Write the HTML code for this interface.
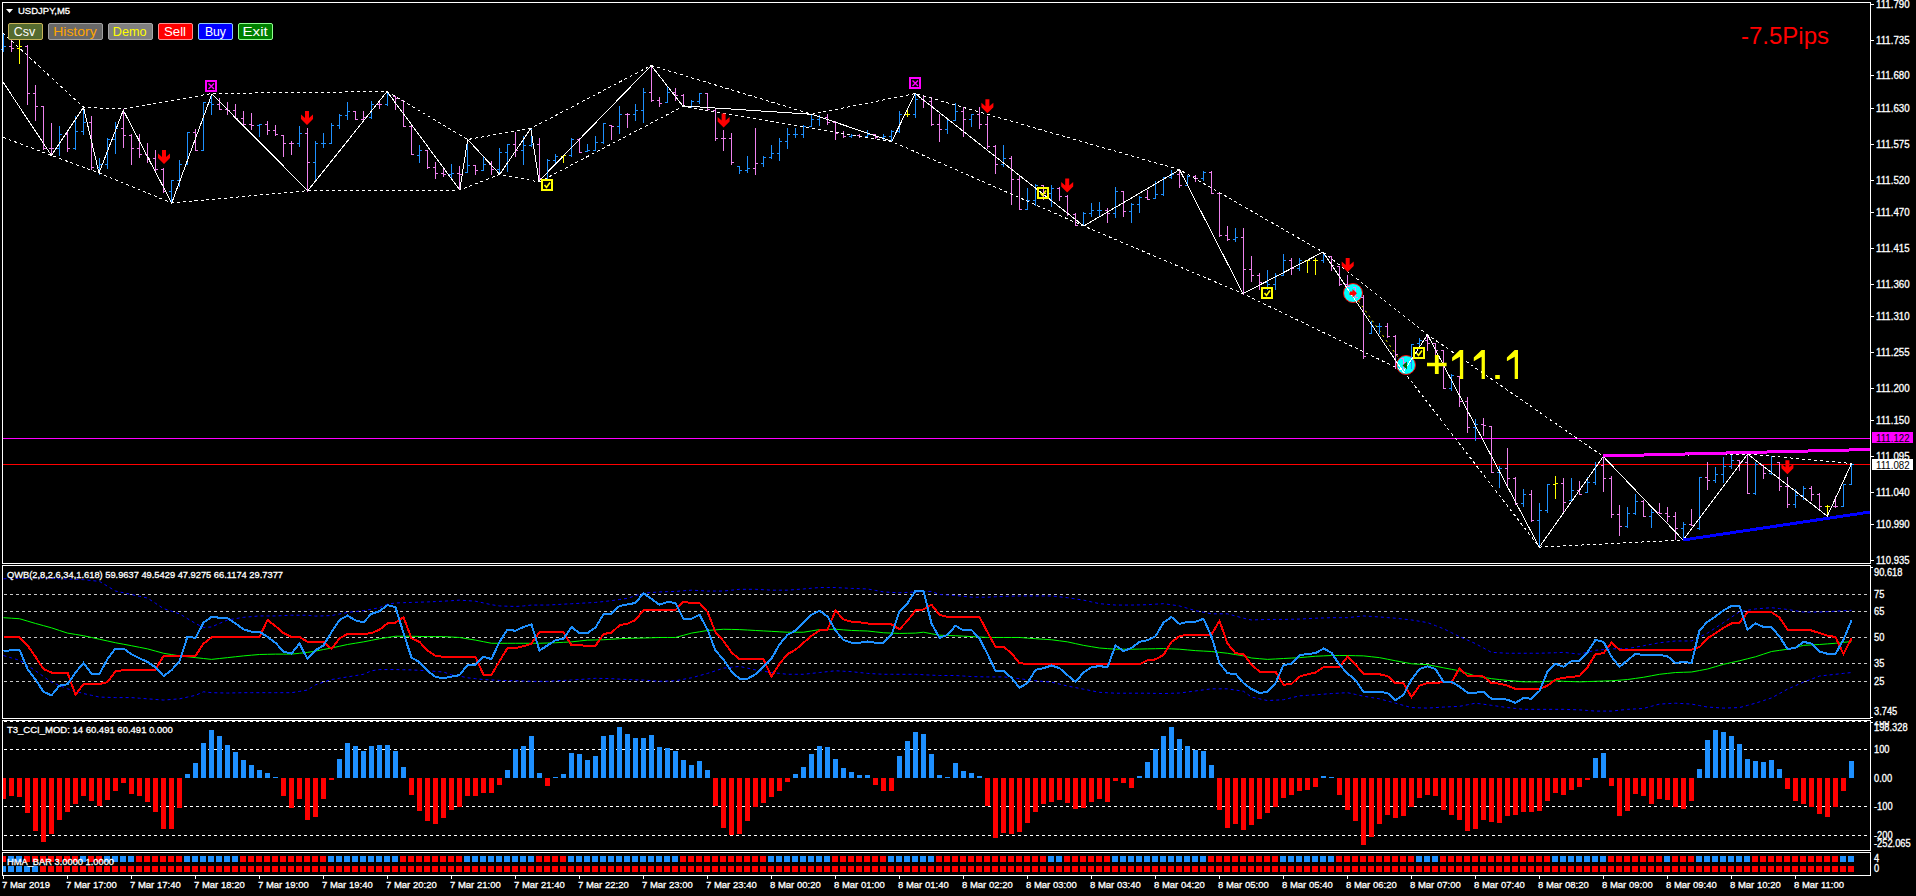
<!DOCTYPE html>
<html><head><meta charset="utf-8"><title>USDJPY,M5</title>
<style>
html,body{margin:0;padding:0;background:#000;width:1916px;height:896px;overflow:hidden}
svg{display:block}
text{font-family:"Liberation Sans",sans-serif}
.bt text{stroke:#FFFFFF;stroke-width:0.3px}
</style></head><body>
<svg width="1916" height="896" viewBox="0 0 1916 896">
<defs><clipPath id="mainclip"><rect x="3" y="3" width="1867" height="560"/></clipPath><clipPath id="cciax"><rect x="1872" y="721" width="44" height="20"/></clipPath></defs>
<rect x="0" y="0" width="1916" height="896" fill="#000"/>
<g id="qwb"><path d="M4,594.5H1870M4,611.5H1870M4,637.5H1870M4,663.5H1870M4,681.5H1870" stroke="#C8C8C8" stroke-width="1" stroke-dasharray="3,3" shape-rendering="crispEdges"/><path d="M3.5,578.77 L11.5,578.55 L19.5,578.33 L27.5,578.12 L35.5,577.9 L43.5,578.19 L51.5,578.48 L59.5,578.77 L67.5,579.06 L75.5,579.36 L83.5,579.65 L91.5,580.53 L99.5,581.4 L107.5,586.22 L115.5,591.04 L123.5,592.79 L131.5,594.55 L139.5,596.3 L147.5,598.05 L155.5,603.31 L163.5,608.57 L171.5,611.19 L179.5,613.82 L187.5,618.64 L195.5,623.46 L203.5,627.49 L211.5,626.97 L219.5,623.46 L227.5,619.96 L235.5,618.64 L243.5,617.33 L251.5,616.63 L259.5,615.93 L267.5,615.93 L275.5,615.93 L283.5,615.58 L291.5,615.23 L299.5,615.23 L307.5,615.23 L315.5,616.1 L323.5,615.84 L331.5,615.58 L339.5,614 L347.5,612.42 L355.5,611.55 L363.5,610.67 L371.5,609.18 L379.5,607.69 L387.5,604.18 L395.5,602.96 L403.5,602.7 L411.5,602.43 L419.5,602.17 L427.5,601.91 L435.5,601.56 L443.5,601.21 L451.5,600.68 L459.5,600.15 L467.5,600.68 L475.5,601.21 L483.5,602.96 L491.5,604.71 L499.5,605.94 L507.5,606.2 L515.5,606.46 L523.5,605.94 L531.5,605.06 L539.5,605.06 L547.5,605.06 L555.5,604.62 L563.5,604.18 L571.5,603.75 L579.5,603.31 L587.5,602.87 L595.5,602.43 L603.5,601.56 L611.5,600.68 L619.5,599.5 L627.5,598.31 L635.5,595.73 L643.5,593.14 L651.5,592.53 L659.5,591.92 L667.5,591.65 L675.5,591.39 L683.5,590.78 L691.5,590.16 L699.5,590.6 L707.5,591.04 L715.5,591.04 L723.5,591.04 L731.5,590.16 L739.5,589.29 L747.5,589.29 L755.5,589.29 L763.5,589.73 L771.5,590.16 L779.5,590.16 L787.5,590.16 L795.5,589.55 L803.5,588.94 L811.5,588.24 L819.5,587.54 L827.5,587.54 L835.5,587.54 L843.5,587.97 L851.5,588.41 L859.5,588.67 L867.5,588.94 L875.5,590.43 L883.5,591.92 L891.5,592.36 L899.5,592.79 L907.5,592.36 L915.5,591.92 L923.5,591.65 L931.5,591.39 L939.5,594.55 L947.5,594.98 L955.5,595.42 L963.5,596.3 L971.5,597.17 L979.5,597.17 L987.5,597.17 L995.5,596.74 L1003.5,596.3 L1011.5,596.12 L1019.5,595.95 L1027.5,595.95 L1035.5,595.95 L1043.5,595.95 L1051.5,595.95 L1059.5,596.82 L1067.5,597.7 L1075.5,598.93 L1083.5,600.15 L1091.5,601.91 L1099.5,603.66 L1107.5,604.36 L1115.5,605.06 L1123.5,605.06 L1131.5,605.06 L1139.5,604.89 L1147.5,604.71 L1155.5,604.18 L1163.5,603.66 L1171.5,604.8 L1179.5,605.94 L1187.5,608.3 L1195.5,610.67 L1203.5,612.25 L1211.5,613.82 L1219.5,613.82 L1227.5,613.82 L1235.5,616.01 L1243.5,618.21 L1251.5,619.96 L1259.5,619.69 L1267.5,619.43 L1275.5,619.43 L1283.5,619.43 L1291.5,619.26 L1299.5,619.08 L1307.5,618.64 L1315.5,618.21 L1323.5,617.94 L1331.5,617.68 L1339.5,617.68 L1347.5,617.68 L1355.5,616.8 L1363.5,615.93 L1371.5,616.45 L1379.5,616.98 L1387.5,617.59 L1395.5,618.21 L1403.5,619.08 L1411.5,619.96 L1419.5,621.27 L1427.5,622.59 L1435.5,625.65 L1443.5,628.72 L1451.5,632.66 L1459.5,636.61 L1467.5,640.11 L1475.5,643.62 L1483.5,648 L1491.5,652.38 L1499.5,652.82 L1507.5,653.26 L1515.5,653.26 L1523.5,653.26 L1531.5,653.26 L1539.5,653.26 L1547.5,652.99 L1555.5,652.73 L1563.5,652.38 L1571.5,653.26 L1579.5,654.13 L1587.5,652.2 L1595.5,650.28 L1603.5,649.58 L1611.5,648.87 L1619.5,648.7 L1627.5,648.52 L1635.5,647.12 L1643.5,645.72 L1651.5,644.23 L1659.5,642.74 L1667.5,641.86 L1675.5,640.99 L1683.5,640.99 L1691.5,640.99 L1699.5,637.04 L1707.5,633.1 L1715.5,627.84 L1723.5,622.59 L1731.5,617.15 L1739.5,611.72 L1747.5,610.32 L1755.5,608.92 L1763.5,608.3 L1771.5,607.69 L1779.5,608.57 L1787.5,609.44 L1795.5,610.76 L1803.5,612.07 L1811.5,612.07 L1819.5,612.07 L1827.5,611.63 L1835.5,611.19 L1843.5,610.76 L1851.5,610.32" stroke="#0000FF" stroke-width="1" fill="none" stroke-dasharray="3,3"/><path d="M3.5,655.53 L11.5,657.9 L19.5,660.27 L27.5,665.52 L35.5,670.78 L43.5,676.48 L51.5,682.17 L59.5,685.5 L67.5,688.83 L75.5,691.2 L83.5,693.56 L91.5,695.32 L99.5,697.07 L107.5,697.33 L115.5,697.6 L123.5,697.6 L131.5,697.6 L139.5,698.21 L147.5,698.82 L155.5,699.44 L163.5,700.05 L171.5,699.44 L179.5,698.82 L187.5,697.07 L195.5,695.32 L203.5,691.81 L211.5,692.69 L219.5,692.86 L227.5,693.04 L235.5,692.86 L243.5,692.69 L251.5,692.69 L259.5,692.69 L267.5,692.69 L275.5,692.69 L283.5,692.69 L291.5,692.69 L299.5,691.37 L307.5,690.06 L315.5,684.8 L323.5,682.17 L331.5,679.54 L339.5,678.23 L347.5,676.92 L355.5,675.6 L363.5,674.29 L371.5,670.78 L379.5,669.55 L387.5,669.55 L395.5,669.55 L403.5,669.73 L411.5,669.91 L419.5,670.34 L427.5,670.78 L435.5,671.39 L443.5,672.01 L451.5,674.81 L459.5,676.04 L467.5,677.79 L475.5,678.67 L483.5,679.54 L491.5,679.98 L499.5,680.42 L507.5,680.6 L515.5,680.77 L523.5,681.03 L531.5,681.3 L539.5,681.3 L547.5,681.3 L555.5,680.86 L563.5,680.42 L571.5,679.98 L579.5,679.54 L587.5,678.93 L595.5,678.32 L603.5,678.49 L611.5,678.67 L619.5,679.11 L627.5,679.54 L635.5,679.81 L643.5,680.07 L651.5,680.68 L659.5,681.3 L667.5,681.03 L675.5,680.77 L683.5,679.28 L691.5,677.79 L699.5,675.6 L707.5,673.41 L715.5,670.78 L723.5,668.15 L731.5,667.28 L739.5,666.4 L747.5,668.15 L755.5,669.91 L763.5,671.22 L771.5,672.53 L779.5,673.41 L787.5,674.29 L795.5,674.29 L803.5,674.29 L811.5,673.41 L819.5,672.53 L827.5,671.66 L835.5,670.78 L843.5,671.22 L851.5,671.66 L859.5,672.53 L867.5,673.41 L875.5,673.85 L883.5,674.29 L891.5,674.29 L899.5,674.29 L907.5,674.29 L915.5,674.29 L923.5,674.72 L931.5,675.16 L939.5,675.51 L947.5,675.51 L955.5,675.51 L963.5,676.04 L971.5,676.56 L979.5,676.74 L987.5,676.92 L995.5,676.92 L1003.5,676.92 L1011.5,677.79 L1019.5,678.67 L1027.5,679.72 L1035.5,680.77 L1043.5,681.47 L1051.5,682.17 L1059.5,684.1 L1067.5,686.03 L1075.5,687.61 L1083.5,689.18 L1091.5,690.76 L1099.5,692.34 L1107.5,692.78 L1115.5,693.21 L1123.5,693.21 L1131.5,693.21 L1139.5,693.21 L1147.5,693.21 L1155.5,693.39 L1163.5,693.56 L1171.5,693.3 L1179.5,693.04 L1187.5,691.99 L1195.5,690.94 L1203.5,689.88 L1211.5,688.83 L1219.5,688.83 L1227.5,688.83 L1235.5,690.06 L1243.5,691.29 L1251.5,697.07 L1259.5,698.82 L1267.5,700.57 L1275.5,700.14 L1283.5,699.7 L1291.5,697.77 L1299.5,695.84 L1307.5,695.32 L1315.5,694.79 L1323.5,694.18 L1331.5,693.56 L1339.5,693.13 L1347.5,692.69 L1355.5,694.44 L1363.5,696.19 L1371.5,697.51 L1379.5,698.82 L1387.5,701.01 L1395.5,703.2 L1403.5,705.39 L1411.5,707.58 L1419.5,707.85 L1427.5,708.11 L1435.5,707.58 L1443.5,707.06 L1451.5,706.71 L1459.5,706.36 L1467.5,704.78 L1475.5,703.2 L1483.5,704.25 L1491.5,705.31 L1499.5,706.45 L1507.5,707.58 L1515.5,708.46 L1523.5,709.34 L1531.5,709.34 L1539.5,709.34 L1547.5,709.34 L1555.5,709.34 L1563.5,709.34 L1571.5,709.6 L1579.5,709.86 L1587.5,710.48 L1595.5,711.09 L1603.5,711.09 L1611.5,711.09 L1619.5,710.21 L1627.5,709.34 L1635.5,708.9 L1643.5,708.46 L1651.5,706.27 L1659.5,704.08 L1667.5,703.64 L1675.5,703.2 L1683.5,703.64 L1691.5,704.08 L1699.5,705.57 L1707.5,707.06 L1715.5,707.58 L1723.5,708.11 L1731.5,707.85 L1739.5,707.58 L1747.5,705.39 L1755.5,703.2 L1763.5,700.57 L1771.5,697.95 L1779.5,693.56 L1787.5,689.18 L1795.5,685.68 L1803.5,682.17 L1811.5,679.11 L1819.5,676.04 L1827.5,675.16 L1835.5,674.29 L1843.5,673.41 L1851.5,672.53" stroke="#0000FF" stroke-width="1" fill="none" stroke-dasharray="3,3"/><path d="M3.5,617.68 L11.5,618.21 L19.5,618.73 L27.5,621.1 L35.5,623.46 L43.5,625.65 L51.5,627.84 L59.5,630.47 L67.5,633.1 L75.5,634.42 L83.5,635.73 L91.5,637.48 L99.5,639.24 L107.5,640.99 L115.5,642.74 L123.5,644.23 L131.5,645.72 L139.5,647.3 L147.5,648.87 L155.5,651.07 L163.5,653.26 L171.5,654.57 L179.5,655.88 L187.5,656.76 L195.5,657.64 L203.5,658.51 L211.5,659.39 L219.5,658.51 L227.5,657.64 L235.5,656.76 L243.5,655.88 L251.5,655.18 L259.5,654.48 L267.5,654.31 L275.5,654.13 L283.5,654.13 L291.5,654.13 L299.5,653.26 L307.5,652.38 L315.5,651.07 L323.5,649.53 L331.5,648 L339.5,646.25 L347.5,644.49 L355.5,643.18 L363.5,641.86 L371.5,640.29 L379.5,638.71 L387.5,637.48 L395.5,636.26 L403.5,636.26 L411.5,636.26 L419.5,636.43 L427.5,636.61 L435.5,636.61 L443.5,636.61 L451.5,637.04 L459.5,637.48 L467.5,638.8 L475.5,640.11 L483.5,641.69 L491.5,643.27 L499.5,643.27 L507.5,643.27 L515.5,643.27 L523.5,643.27 L531.5,643.27 L539.5,643.27 L547.5,643 L555.5,642.74 L563.5,642.3 L571.5,641.86 L579.5,640.99 L587.5,640.11 L595.5,639.94 L603.5,639.76 L611.5,639.24 L619.5,638.71 L627.5,638.36 L635.5,638.18 L643.5,638.01 L651.5,637.75 L659.5,637.48 L667.5,637.48 L675.5,637.48 L683.5,635.29 L691.5,633.1 L699.5,631.79 L707.5,630.47 L715.5,629.86 L723.5,629.25 L731.5,629.42 L739.5,629.6 L747.5,630.03 L755.5,630.47 L763.5,630.91 L771.5,631.35 L779.5,631.79 L787.5,632.23 L795.5,632.23 L803.5,632.23 L811.5,630.91 L819.5,629.6 L827.5,629.42 L835.5,629.25 L843.5,629.86 L851.5,630.47 L859.5,630.74 L867.5,631 L875.5,631.87 L883.5,632.75 L891.5,633.1 L899.5,633.45 L907.5,633.28 L915.5,633.1 L923.5,632.23 L931.5,633.72 L939.5,635.2 L947.5,635.47 L955.5,635.73 L963.5,636.17 L971.5,636.61 L979.5,637.04 L987.5,637.48 L995.5,637.48 L1003.5,637.48 L1011.5,637.48 L1019.5,637.48 L1027.5,638.1 L1035.5,638.71 L1043.5,639.24 L1051.5,639.76 L1059.5,640.81 L1067.5,641.86 L1075.5,643.62 L1083.5,645.37 L1091.5,646.68 L1099.5,648 L1107.5,648.61 L1115.5,649.23 L1123.5,649.23 L1131.5,649.23 L1139.5,649.05 L1147.5,648.87 L1155.5,648.7 L1163.5,648.52 L1171.5,648.87 L1179.5,649.23 L1187.5,649.93 L1195.5,650.63 L1203.5,651.07 L1211.5,651.5 L1219.5,652.38 L1227.5,653.26 L1235.5,654.57 L1243.5,655.88 L1251.5,657.99 L1259.5,658.69 L1267.5,659.39 L1275.5,658.95 L1283.5,658.51 L1291.5,658.08 L1299.5,657.64 L1307.5,656.94 L1315.5,656.24 L1323.5,655.88 L1331.5,655.53 L1339.5,655.53 L1347.5,655.53 L1355.5,655.71 L1363.5,655.88 L1371.5,656.76 L1379.5,657.64 L1387.5,659.21 L1395.5,660.79 L1403.5,662.28 L1411.5,663.77 L1419.5,664.21 L1427.5,664.65 L1435.5,666.22 L1443.5,667.8 L1451.5,669.29 L1459.5,670.78 L1467.5,673.41 L1475.5,676.04 L1483.5,677.35 L1491.5,678.67 L1499.5,679.54 L1507.5,680.42 L1515.5,681.12 L1523.5,681.82 L1531.5,681.82 L1539.5,681.82 L1547.5,681.3 L1555.5,680.77 L1563.5,681.3 L1571.5,681.56 L1579.5,681.82 L1587.5,681.56 L1595.5,681.3 L1603.5,681.03 L1611.5,680.77 L1619.5,680.16 L1627.5,679.54 L1635.5,678.4 L1643.5,677.27 L1651.5,675.78 L1659.5,674.29 L1667.5,673.41 L1675.5,672.53 L1683.5,672.27 L1691.5,672.01 L1699.5,670.52 L1707.5,669.03 L1715.5,666.66 L1723.5,664.3 L1731.5,662.54 L1739.5,660.79 L1747.5,658.78 L1755.5,656.76 L1763.5,654.13 L1771.5,651.5 L1779.5,650.36 L1787.5,649.23 L1795.5,647.3 L1803.5,645.37 L1811.5,644.93 L1819.5,644.49 L1827.5,643.88 L1835.5,643.27 L1843.5,642.39 L1851.5,641.51" stroke="#00FF00" stroke-width="1" fill="none"/><path d="M3.5,637.13 L11.5,637.13 L19.5,637.13 L27.5,645.37 L35.5,656.76 L43.5,669.03 L51.5,672.53 L59.5,672.53 L67.5,672.53 L75.5,694.79 L83.5,683.93 L91.5,683.93 L99.5,683.93 L107.5,682.17 L115.5,671.13 L123.5,670.26 L131.5,669.55 L139.5,669.55 L147.5,669.55 L155.5,669.55 L163.5,655.88 L171.5,655.88 L179.5,655.88 L187.5,655.88 L195.5,655.88 L203.5,643.62 L211.5,637.48 L219.5,636.96 L227.5,636.96 L235.5,636.96 L243.5,636.96 L251.5,636.96 L259.5,636.96 L267.5,619.96 L275.5,626.09 L283.5,633.1 L291.5,636.96 L299.5,636.96 L307.5,641.86 L315.5,641.86 L323.5,641.86 L331.5,648.87 L339.5,638.36 L347.5,633.98 L355.5,633.98 L363.5,633.98 L371.5,633.1 L379.5,629.6 L387.5,623.46 L395.5,622.59 L403.5,617.33 L411.5,638.36 L419.5,641.86 L427.5,650.63 L435.5,655.88 L443.5,656.76 L451.5,656.76 L459.5,656.76 L467.5,656.76 L475.5,656.76 L483.5,674.81 L491.5,674.81 L499.5,661.14 L507.5,648 L515.5,648 L523.5,646.25 L531.5,643.62 L539.5,632.23 L547.5,632.23 L555.5,632.23 L563.5,632.23 L571.5,645.37 L579.5,645.37 L587.5,645.72 L595.5,645.72 L603.5,633.98 L611.5,632.75 L619.5,625.22 L627.5,623.73 L635.5,619.96 L643.5,609.97 L651.5,609.97 L659.5,609.97 L667.5,609.97 L675.5,609.97 L683.5,601.91 L691.5,602.96 L699.5,602.96 L707.5,612.07 L715.5,632.23 L723.5,640.99 L731.5,652.38 L739.5,659.39 L747.5,659.39 L755.5,659.39 L763.5,659.39 L771.5,676.56 L779.5,663.77 L787.5,654.13 L795.5,649.75 L803.5,642.74 L811.5,635.73 L819.5,630.47 L827.5,629.6 L835.5,610.67 L843.5,619.43 L851.5,621.71 L859.5,622.24 L867.5,623.46 L875.5,623.99 L883.5,623.99 L891.5,624.34 L899.5,629.25 L907.5,620.83 L915.5,610.32 L923.5,609.44 L931.5,604.71 L939.5,614.7 L947.5,616.98 L955.5,616.98 L963.5,616.98 L971.5,616.98 L979.5,616.98 L987.5,632.23 L995.5,646.77 L1003.5,646.77 L1011.5,653.26 L1019.5,663.25 L1027.5,663.77 L1035.5,663.77 L1043.5,663.77 L1051.5,663.77 L1059.5,663.77 L1067.5,663.77 L1075.5,663.77 L1083.5,663.77 L1091.5,663.77 L1099.5,663.77 L1107.5,664.3 L1115.5,664.3 L1123.5,664.3 L1131.5,664.3 L1139.5,664.3 L1147.5,660.27 L1155.5,659.39 L1163.5,655.01 L1171.5,641.86 L1179.5,636.26 L1187.5,634.5 L1195.5,634.5 L1203.5,634.5 L1211.5,634.5 L1219.5,620.83 L1227.5,643.62 L1235.5,653.26 L1243.5,654.13 L1251.5,664.65 L1259.5,671.66 L1267.5,671.66 L1275.5,671.66 L1283.5,684.8 L1291.5,683.93 L1299.5,676.56 L1307.5,674.29 L1315.5,672.53 L1323.5,667.28 L1331.5,667.28 L1339.5,666.75 L1347.5,656.76 L1355.5,664.65 L1363.5,673.76 L1371.5,673.76 L1379.5,674.29 L1387.5,676.04 L1395.5,683.05 L1403.5,683.05 L1411.5,697.07 L1419.5,685.68 L1427.5,683.05 L1435.5,683.05 L1443.5,682.17 L1451.5,682.52 L1459.5,668.15 L1467.5,676.04 L1475.5,676.04 L1483.5,676.56 L1491.5,683.05 L1499.5,683.57 L1507.5,685.68 L1515.5,688.83 L1523.5,688.83 L1531.5,688.83 L1539.5,688.83 L1547.5,685.68 L1555.5,679.54 L1563.5,677.79 L1571.5,676.92 L1579.5,676.04 L1587.5,667.28 L1595.5,654.13 L1603.5,653.26 L1611.5,642.74 L1619.5,649.75 L1627.5,649.75 L1635.5,649.75 L1643.5,649.75 L1651.5,649.75 L1659.5,649.75 L1667.5,649.75 L1675.5,649.75 L1683.5,649.75 L1691.5,649.75 L1699.5,647.12 L1707.5,638.36 L1715.5,633.1 L1723.5,627.84 L1731.5,623.46 L1739.5,622.59 L1747.5,612.42 L1755.5,612.07 L1763.5,612.07 L1771.5,612.07 L1779.5,617.68 L1787.5,629.6 L1795.5,629.6 L1803.5,629.6 L1811.5,630.47 L1819.5,633.1 L1827.5,635.73 L1835.5,636.96 L1843.5,654.13 L1851.5,638.36" stroke="#FF0000" stroke-width="2" fill="none" shape-rendering="crispEdges"/><path d="M3.5,650.98 L11.5,650.28 L19.5,649.75 L27.5,669.03 L35.5,679.54 L43.5,691.81 L51.5,695.32 L59.5,685.68 L67.5,684.28 L75.5,672.53 L83.5,662.89 L91.5,673.76 L99.5,673.76 L107.5,659.04 L115.5,648.52 L123.5,648.52 L131.5,654.13 L139.5,658.16 L147.5,662.02 L155.5,667.28 L163.5,676.04 L171.5,670.26 L179.5,661.14 L187.5,636.61 L195.5,638.01 L203.5,622.59 L211.5,616.98 L219.5,617.68 L227.5,618.21 L235.5,623.46 L243.5,629.25 L251.5,631.7 L259.5,631.7 L267.5,636.96 L275.5,642.74 L283.5,651.5 L291.5,653.61 L299.5,643.62 L307.5,659.04 L315.5,650.19 L323.5,645.37 L331.5,632.23 L339.5,619.96 L347.5,615.58 L355.5,620.48 L363.5,622.24 L371.5,613.82 L379.5,611.19 L387.5,605.06 L395.5,607.16 L403.5,633.1 L411.5,657.64 L419.5,662.02 L427.5,670.78 L435.5,676.92 L443.5,678.14 L451.5,676.56 L459.5,675.16 L467.5,665 L475.5,664.65 L483.5,656.76 L491.5,659.04 L499.5,641.86 L507.5,629.6 L515.5,630.82 L523.5,626.97 L531.5,624.34 L539.5,650.63 L547.5,645.37 L555.5,640.11 L563.5,638.71 L571.5,626.97 L579.5,633.1 L587.5,633.1 L595.5,627.49 L603.5,614.17 L611.5,613.82 L619.5,605.94 L627.5,604.45 L635.5,602.96 L643.5,593.14 L651.5,598.93 L659.5,604.71 L667.5,601.91 L675.5,602.96 L683.5,618.73 L691.5,618.73 L699.5,614.7 L707.5,629.6 L715.5,650.63 L723.5,659.39 L731.5,671.66 L739.5,678.67 L747.5,678.67 L755.5,674.29 L763.5,666.4 L771.5,658.51 L779.5,644.49 L787.5,634.85 L795.5,630.47 L803.5,622.59 L811.5,614.7 L819.5,610.67 L827.5,616.45 L835.5,630.47 L843.5,640.11 L851.5,642.74 L859.5,642.74 L867.5,641.51 L875.5,642.74 L883.5,642.74 L891.5,634.85 L899.5,611.19 L907.5,603.31 L915.5,590.69 L923.5,591.04 L931.5,623.46 L939.5,637.92 L947.5,634.85 L955.5,625.74 L963.5,630.47 L971.5,629.95 L979.5,638.36 L987.5,654.13 L995.5,670.78 L1003.5,670.78 L1011.5,677.79 L1019.5,687.78 L1027.5,683.05 L1035.5,669.91 L1043.5,668.15 L1051.5,665.52 L1059.5,668.15 L1067.5,675.16 L1075.5,681.82 L1083.5,672.53 L1091.5,667.28 L1099.5,666.05 L1107.5,667.28 L1115.5,645.37 L1123.5,650.98 L1131.5,648 L1139.5,641.86 L1147.5,640.11 L1155.5,636.26 L1163.5,622.59 L1171.5,616.98 L1179.5,623.99 L1187.5,621.71 L1195.5,621.71 L1203.5,618.73 L1211.5,636.61 L1219.5,662.89 L1227.5,673.41 L1235.5,673.76 L1243.5,683.05 L1251.5,689.01 L1259.5,693.04 L1267.5,691.81 L1275.5,683.05 L1283.5,665 L1291.5,663.77 L1299.5,655.53 L1307.5,653.78 L1315.5,653.26 L1323.5,648.52 L1331.5,652.73 L1339.5,664.65 L1347.5,673.41 L1355.5,680.07 L1363.5,691.81 L1371.5,691.81 L1379.5,691.81 L1387.5,693.04 L1395.5,700.05 L1403.5,694.79 L1411.5,679.54 L1419.5,669.03 L1427.5,666.4 L1435.5,669.03 L1443.5,681.82 L1451.5,681.82 L1459.5,686.55 L1467.5,692.69 L1475.5,692.69 L1483.5,691.81 L1491.5,698.82 L1499.5,698.82 L1507.5,699.7 L1515.5,702.85 L1523.5,697.95 L1531.5,698.82 L1539.5,690.94 L1547.5,671.66 L1555.5,663.77 L1563.5,666.75 L1571.5,661.14 L1579.5,660.79 L1587.5,652.38 L1595.5,639.76 L1603.5,641.86 L1611.5,656.76 L1619.5,666.75 L1627.5,660.27 L1635.5,653.78 L1643.5,655.01 L1651.5,655.01 L1659.5,655.01 L1667.5,656.24 L1675.5,662.89 L1683.5,662.02 L1691.5,662.89 L1699.5,630.47 L1707.5,621.71 L1715.5,616.45 L1723.5,610.32 L1731.5,605.94 L1739.5,605.94 L1747.5,629.6 L1755.5,623.46 L1763.5,626.97 L1771.5,626.97 L1779.5,636.61 L1787.5,648.87 L1795.5,648 L1803.5,641.86 L1811.5,643.62 L1819.5,651.5 L1827.5,653.78 L1835.5,653.78 L1843.5,639.76 L1851.5,620.48" stroke="#1E90FF" stroke-width="2" fill="none" shape-rendering="crispEdges"/></g>
<g id="cci"><path d="M4,721.5H1870M4,749.5H1870M4,806.5H1870M4,835.5H1870" stroke="#FFFFFF" stroke-width="1" stroke-dasharray="3,3" shape-rendering="crispEdges"/><path d="M185,774h5V778h-5ZM193,763h5V778h-5ZM201,743h5V778h-5ZM209,730h5V778h-5ZM217,736h5V778h-5ZM225,745h5V778h-5ZM233,752h5V778h-5ZM241,760h5V778h-5ZM249,765h5V778h-5ZM257,770h5V778h-5ZM265,773h5V778h-5ZM273,777h5V778h-5ZM337,759h5V778h-5ZM345,743h5V778h-5ZM353,746h5V778h-5ZM361,751h5V778h-5ZM369,746h5V778h-5ZM377,745h5V778h-5ZM385,745h5V778h-5ZM393,751h5V778h-5ZM401,767h5V778h-5ZM505,770h5V778h-5ZM513,749h5V778h-5ZM521,746h5V778h-5ZM529,736h5V778h-5ZM537,773h5V778h-5ZM553,777h5V778h-5ZM561,774h5V778h-5ZM569,753h5V778h-5ZM577,754h5V778h-5ZM585,760h5V778h-5ZM593,756h5V778h-5ZM601,736h5V778h-5ZM609,735h5V778h-5ZM617,727h5V778h-5ZM625,734h5V778h-5ZM633,738h5V778h-5ZM641,738h5V778h-5ZM649,735h5V778h-5ZM657,747h5V778h-5ZM665,748h5V778h-5ZM673,751h5V778h-5ZM681,760h5V778h-5ZM689,765h5V778h-5ZM697,761h5V778h-5ZM705,770h5V778h-5ZM793,774h5V778h-5ZM801,767h5V778h-5ZM809,754h5V778h-5ZM817,746h5V778h-5ZM825,747h5V778h-5ZM833,759h5V778h-5ZM841,768h5V778h-5ZM849,772h5V778h-5ZM857,775h5V778h-5ZM865,775h5V778h-5ZM897,756h5V778h-5ZM905,741h5V778h-5ZM913,732h5V778h-5ZM921,734h5V778h-5ZM929,754h5V778h-5ZM937,775h5V778h-5ZM945,777h5V778h-5ZM953,763h5V778h-5ZM961,771h5V778h-5ZM969,773h5V778h-5ZM977,776h5V778h-5ZM1137,776h5V778h-5ZM1145,762h5V778h-5ZM1153,749h5V778h-5ZM1161,736h5V778h-5ZM1169,727h5V778h-5ZM1177,739h5V778h-5ZM1185,746h5V778h-5ZM1193,750h5V778h-5ZM1201,751h5V778h-5ZM1209,765h5V778h-5ZM1321,776h5V778h-5ZM1329,777h5V778h-5ZM1593,758h5V778h-5ZM1601,753h5V778h-5ZM1697,769h5V778h-5ZM1705,740h5V778h-5ZM1713,730h5V778h-5ZM1721,732h5V778h-5ZM1729,736h5V778h-5ZM1737,744h5V778h-5ZM1745,759h5V778h-5ZM1753,761h5V778h-5ZM1761,762h5V778h-5ZM1769,760h5V778h-5ZM1777,769h5V778h-5ZM1849,761h5V778h-5Z" fill="#1E90FF" shape-rendering="crispEdges"/><path d="M3,778h3V799h-3ZM9,778h5V796h-5ZM17,778h5V797h-5ZM25,778h5V813h-5ZM33,778h5V831h-5ZM41,778h5V842h-5ZM49,778h5V834h-5ZM57,778h5V820h-5ZM65,778h5V812h-5ZM73,778h5V804h-5ZM81,778h5V796h-5ZM89,778h5V801h-5ZM97,778h5V806h-5ZM105,778h5V800h-5ZM113,778h5V791h-5ZM121,778h5V783h-5ZM129,778h5V794h-5ZM137,778h5V796h-5ZM145,778h5V802h-5ZM153,778h5V812h-5ZM161,778h5V829h-5ZM169,778h5V829h-5ZM177,778h5V808h-5ZM281,778h5V796h-5ZM289,778h5V808h-5ZM297,778h5V799h-5ZM305,778h5V820h-5ZM313,778h5V817h-5ZM321,778h5V799h-5ZM329,778h5V780h-5ZM409,778h5V795h-5ZM417,778h5V811h-5ZM425,778h5V821h-5ZM433,778h5V824h-5ZM441,778h5V818h-5ZM449,778h5V810h-5ZM457,778h5V807h-5ZM465,778h5V796h-5ZM473,778h5V796h-5ZM481,778h5V793h-5ZM489,778h5V793h-5ZM497,778h5V785h-5ZM545,778h5V786h-5ZM713,778h5V806h-5ZM721,778h5V828h-5ZM729,778h5V835h-5ZM737,778h5V834h-5ZM745,778h5V821h-5ZM753,778h5V807h-5ZM761,778h5V803h-5ZM769,778h5V797h-5ZM777,778h5V791h-5ZM785,778h5V782h-5ZM873,778h5V785h-5ZM881,778h5V791h-5ZM889,778h5V791h-5ZM985,778h5V806h-5ZM993,778h5V838h-5ZM1001,778h5V833h-5ZM1009,778h5V834h-5ZM1017,778h5V832h-5ZM1025,778h5V823h-5ZM1033,778h5V812h-5ZM1041,778h5V804h-5ZM1049,778h5V802h-5ZM1057,778h5V800h-5ZM1065,778h5V803h-5ZM1073,778h5V809h-5ZM1081,778h5V808h-5ZM1089,778h5V802h-5ZM1097,778h5V799h-5ZM1105,778h5V802h-5ZM1113,778h5V781h-5ZM1121,778h5V783h-5ZM1129,778h5V788h-5ZM1217,778h5V810h-5ZM1225,778h5V828h-5ZM1233,778h5V824h-5ZM1241,778h5V830h-5ZM1249,778h5V825h-5ZM1257,778h5V819h-5ZM1265,778h5V813h-5ZM1273,778h5V807h-5ZM1281,778h5V798h-5ZM1289,778h5V795h-5ZM1297,778h5V791h-5ZM1305,778h5V790h-5ZM1313,778h5V787h-5ZM1337,778h5V795h-5ZM1345,778h5V810h-5ZM1353,778h5V821h-5ZM1361,778h5V845h-5ZM1369,778h5V837h-5ZM1377,778h5V824h-5ZM1385,778h5V815h-5ZM1393,778h5V818h-5ZM1401,778h5V816h-5ZM1409,778h5V807h-5ZM1417,778h5V798h-5ZM1425,778h5V795h-5ZM1433,778h5V796h-5ZM1441,778h5V810h-5ZM1449,778h5V815h-5ZM1457,778h5V820h-5ZM1465,778h5V831h-5ZM1473,778h5V829h-5ZM1481,778h5V820h-5ZM1489,778h5V822h-5ZM1497,778h5V823h-5ZM1505,778h5V816h-5ZM1513,778h5V815h-5ZM1521,778h5V812h-5ZM1529,778h5V812h-5ZM1537,778h5V811h-5ZM1545,778h5V801h-5ZM1553,778h5V793h-5ZM1561,778h5V795h-5ZM1569,778h5V790h-5ZM1577,778h5V787h-5ZM1585,778h5V780h-5ZM1609,778h5V786h-5ZM1617,778h5V816h-5ZM1625,778h5V811h-5ZM1633,778h5V794h-5ZM1641,778h5V796h-5ZM1649,778h5V804h-5ZM1657,778h5V799h-5ZM1665,778h5V800h-5ZM1673,778h5V807h-5ZM1681,778h5V809h-5ZM1689,778h5V801h-5ZM1785,778h5V789h-5ZM1793,778h5V801h-5ZM1801,778h5V804h-5ZM1809,778h5V807h-5ZM1817,778h5V814h-5ZM1825,778h5V817h-5ZM1833,778h5V807h-5ZM1841,778h5V791h-5Z" fill="#FF0000" shape-rendering="crispEdges"/></g>
<g id="hma"><path d="M3,856h3v6h-3ZM24,856h6v6h-6ZM32,856h6v6h-6ZM40,856h6v6h-6ZM48,856h6v6h-6ZM56,856h6v6h-6ZM64,856h6v6h-6ZM72,856h6v6h-6ZM88,856h6v6h-6ZM96,856h6v6h-6ZM136,856h6v6h-6ZM144,856h6v6h-6ZM152,856h6v6h-6ZM160,856h6v6h-6ZM168,856h6v6h-6ZM176,856h6v6h-6ZM240,856h6v6h-6ZM248,856h6v6h-6ZM256,856h6v6h-6ZM264,856h6v6h-6ZM272,856h6v6h-6ZM280,856h6v6h-6ZM288,856h6v6h-6ZM296,856h6v6h-6ZM304,856h6v6h-6ZM312,856h6v6h-6ZM320,856h6v6h-6ZM400,856h6v6h-6ZM408,856h6v6h-6ZM416,856h6v6h-6ZM424,856h6v6h-6ZM432,856h6v6h-6ZM440,856h6v6h-6ZM448,856h6v6h-6ZM456,856h6v6h-6ZM536,856h6v6h-6ZM544,856h6v6h-6ZM552,856h6v6h-6ZM560,856h6v6h-6ZM680,856h6v6h-6ZM688,856h6v6h-6ZM696,856h6v6h-6ZM704,856h6v6h-6ZM712,856h6v6h-6ZM720,856h6v6h-6ZM728,856h6v6h-6ZM736,856h6v6h-6ZM744,856h6v6h-6ZM752,856h6v6h-6ZM760,856h6v6h-6ZM832,856h6v6h-6ZM840,856h6v6h-6ZM848,856h6v6h-6ZM856,856h6v6h-6ZM864,856h6v6h-6ZM872,856h6v6h-6ZM880,856h6v6h-6ZM936,856h6v6h-6ZM944,856h6v6h-6ZM952,856h6v6h-6ZM960,856h6v6h-6ZM968,856h6v6h-6ZM976,856h6v6h-6ZM984,856h6v6h-6ZM992,856h6v6h-6ZM1000,856h6v6h-6ZM1008,856h6v6h-6ZM1016,856h6v6h-6ZM1024,856h6v6h-6ZM1032,856h6v6h-6ZM1040,856h6v6h-6ZM1064,856h6v6h-6ZM1072,856h6v6h-6ZM1080,856h6v6h-6ZM1088,856h6v6h-6ZM1096,856h6v6h-6ZM1104,856h6v6h-6ZM1208,856h6v6h-6ZM1216,856h6v6h-6ZM1224,856h6v6h-6ZM1232,856h6v6h-6ZM1240,856h6v6h-6ZM1248,856h6v6h-6ZM1256,856h6v6h-6ZM1264,856h6v6h-6ZM1272,856h6v6h-6ZM1336,856h6v6h-6ZM1344,856h6v6h-6ZM1352,856h6v6h-6ZM1360,856h6v6h-6ZM1368,856h6v6h-6ZM1376,856h6v6h-6ZM1384,856h6v6h-6ZM1392,856h6v6h-6ZM1400,856h6v6h-6ZM1408,856h6v6h-6ZM1440,856h6v6h-6ZM1448,856h6v6h-6ZM1456,856h6v6h-6ZM1464,856h6v6h-6ZM1472,856h6v6h-6ZM1480,856h6v6h-6ZM1488,856h6v6h-6ZM1496,856h6v6h-6ZM1504,856h6v6h-6ZM1512,856h6v6h-6ZM1520,856h6v6h-6ZM1528,856h6v6h-6ZM1536,856h6v6h-6ZM1544,856h6v6h-6ZM1608,856h6v6h-6ZM1616,856h6v6h-6ZM1624,856h6v6h-6ZM1632,856h6v6h-6ZM1640,856h6v6h-6ZM1648,856h6v6h-6ZM1656,856h6v6h-6ZM1672,856h6v6h-6ZM1680,856h6v6h-6ZM1688,856h6v6h-6ZM1752,856h6v6h-6ZM1760,856h6v6h-6ZM1768,856h6v6h-6ZM1776,856h6v6h-6ZM1784,856h6v6h-6ZM1792,856h6v6h-6ZM1800,856h6v6h-6ZM1808,856h6v6h-6ZM1816,856h6v6h-6ZM1824,856h6v6h-6ZM1832,856h6v6h-6Z" fill="#FF0000" shape-rendering="crispEdges"/><path d="M8,856h6v6h-6ZM16,856h6v6h-6ZM80,856h6v6h-6ZM104,856h6v6h-6ZM112,856h6v6h-6ZM120,856h6v6h-6ZM128,856h6v6h-6ZM184,856h6v6h-6ZM192,856h6v6h-6ZM200,856h6v6h-6ZM208,856h6v6h-6ZM216,856h6v6h-6ZM224,856h6v6h-6ZM232,856h6v6h-6ZM328,856h6v6h-6ZM336,856h6v6h-6ZM344,856h6v6h-6ZM352,856h6v6h-6ZM360,856h6v6h-6ZM368,856h6v6h-6ZM376,856h6v6h-6ZM384,856h6v6h-6ZM392,856h6v6h-6ZM464,856h6v6h-6ZM472,856h6v6h-6ZM480,856h6v6h-6ZM488,856h6v6h-6ZM496,856h6v6h-6ZM504,856h6v6h-6ZM512,856h6v6h-6ZM520,856h6v6h-6ZM528,856h6v6h-6ZM568,856h6v6h-6ZM576,856h6v6h-6ZM584,856h6v6h-6ZM592,856h6v6h-6ZM600,856h6v6h-6ZM608,856h6v6h-6ZM616,856h6v6h-6ZM624,856h6v6h-6ZM632,856h6v6h-6ZM640,856h6v6h-6ZM648,856h6v6h-6ZM656,856h6v6h-6ZM664,856h6v6h-6ZM672,856h6v6h-6ZM768,856h6v6h-6ZM776,856h6v6h-6ZM784,856h6v6h-6ZM792,856h6v6h-6ZM800,856h6v6h-6ZM808,856h6v6h-6ZM816,856h6v6h-6ZM824,856h6v6h-6ZM888,856h6v6h-6ZM896,856h6v6h-6ZM904,856h6v6h-6ZM912,856h6v6h-6ZM920,856h6v6h-6ZM928,856h6v6h-6ZM1048,856h6v6h-6ZM1056,856h6v6h-6ZM1112,856h6v6h-6ZM1120,856h6v6h-6ZM1128,856h6v6h-6ZM1136,856h6v6h-6ZM1144,856h6v6h-6ZM1152,856h6v6h-6ZM1160,856h6v6h-6ZM1168,856h6v6h-6ZM1176,856h6v6h-6ZM1184,856h6v6h-6ZM1192,856h6v6h-6ZM1200,856h6v6h-6ZM1280,856h6v6h-6ZM1288,856h6v6h-6ZM1296,856h6v6h-6ZM1304,856h6v6h-6ZM1312,856h6v6h-6ZM1320,856h6v6h-6ZM1328,856h6v6h-6ZM1416,856h6v6h-6ZM1424,856h6v6h-6ZM1432,856h6v6h-6ZM1552,856h6v6h-6ZM1560,856h6v6h-6ZM1568,856h6v6h-6ZM1576,856h6v6h-6ZM1584,856h6v6h-6ZM1592,856h6v6h-6ZM1600,856h6v6h-6ZM1664,856h6v6h-6ZM1696,856h6v6h-6ZM1704,856h6v6h-6ZM1712,856h6v6h-6ZM1720,856h6v6h-6ZM1728,856h6v6h-6ZM1736,856h6v6h-6ZM1744,856h6v6h-6ZM1840,856h6v6h-6ZM1848,856h6v6h-6Z" fill="#1E90FF" shape-rendering="crispEdges"/><path d="M40,866h6v6h-6ZM48,866h6v6h-6ZM56,866h6v6h-6ZM64,866h6v6h-6ZM72,866h6v6h-6ZM80,866h6v6h-6ZM88,866h6v6h-6ZM96,866h6v6h-6ZM104,866h6v6h-6ZM112,866h6v6h-6ZM120,866h6v6h-6ZM128,866h6v6h-6ZM136,866h6v6h-6ZM144,866h6v6h-6ZM152,866h6v6h-6ZM160,866h6v6h-6ZM168,866h6v6h-6ZM176,866h6v6h-6ZM184,866h6v6h-6ZM192,866h6v6h-6ZM200,866h6v6h-6ZM208,866h6v6h-6ZM216,866h6v6h-6ZM224,866h6v6h-6ZM232,866h6v6h-6ZM240,866h6v6h-6ZM248,866h6v6h-6ZM256,866h6v6h-6ZM264,866h6v6h-6ZM272,866h6v6h-6ZM280,866h6v6h-6ZM288,866h6v6h-6ZM296,866h6v6h-6ZM304,866h6v6h-6ZM312,866h6v6h-6ZM320,866h6v6h-6ZM328,866h6v6h-6ZM336,866h6v6h-6ZM344,866h6v6h-6ZM352,866h6v6h-6ZM360,866h6v6h-6ZM368,866h6v6h-6ZM376,866h6v6h-6ZM384,866h6v6h-6ZM392,866h6v6h-6ZM400,866h6v6h-6ZM408,866h6v6h-6ZM416,866h6v6h-6ZM424,866h6v6h-6ZM432,866h6v6h-6ZM440,866h6v6h-6ZM448,866h6v6h-6ZM456,866h6v6h-6ZM464,866h6v6h-6ZM472,866h6v6h-6ZM480,866h6v6h-6ZM488,866h6v6h-6ZM496,866h6v6h-6ZM504,866h6v6h-6ZM512,866h6v6h-6ZM520,866h6v6h-6ZM528,866h6v6h-6ZM536,866h6v6h-6ZM544,866h6v6h-6ZM552,866h6v6h-6ZM560,866h6v6h-6ZM568,866h6v6h-6ZM576,866h6v6h-6ZM584,866h6v6h-6ZM592,866h6v6h-6ZM600,866h6v6h-6ZM608,866h6v6h-6ZM616,866h6v6h-6ZM624,866h6v6h-6ZM632,866h6v6h-6ZM640,866h6v6h-6ZM648,866h6v6h-6ZM656,866h6v6h-6ZM664,866h6v6h-6ZM672,866h6v6h-6ZM680,866h6v6h-6ZM688,866h6v6h-6ZM696,866h6v6h-6ZM704,866h6v6h-6ZM712,866h6v6h-6ZM720,866h6v6h-6ZM728,866h6v6h-6ZM736,866h6v6h-6ZM744,866h6v6h-6ZM752,866h6v6h-6ZM760,866h6v6h-6ZM768,866h6v6h-6ZM776,866h6v6h-6ZM784,866h6v6h-6ZM792,866h6v6h-6ZM800,866h6v6h-6ZM808,866h6v6h-6ZM816,866h6v6h-6ZM824,866h6v6h-6ZM832,866h6v6h-6ZM840,866h6v6h-6ZM848,866h6v6h-6ZM856,866h6v6h-6ZM864,866h6v6h-6ZM872,866h6v6h-6ZM880,866h6v6h-6ZM888,866h6v6h-6ZM896,866h6v6h-6ZM904,866h6v6h-6ZM912,866h6v6h-6ZM920,866h6v6h-6ZM928,866h6v6h-6ZM936,866h6v6h-6ZM944,866h6v6h-6ZM952,866h6v6h-6ZM960,866h6v6h-6ZM968,866h6v6h-6ZM976,866h6v6h-6ZM984,866h6v6h-6ZM992,866h6v6h-6ZM1000,866h6v6h-6ZM1008,866h6v6h-6ZM1016,866h6v6h-6ZM1024,866h6v6h-6ZM1032,866h6v6h-6ZM1040,866h6v6h-6ZM1048,866h6v6h-6ZM1056,866h6v6h-6ZM1064,866h6v6h-6ZM1072,866h6v6h-6ZM1080,866h6v6h-6ZM1088,866h6v6h-6ZM1096,866h6v6h-6ZM1104,866h6v6h-6ZM1112,866h6v6h-6ZM1120,866h6v6h-6ZM1128,866h6v6h-6ZM1136,866h6v6h-6ZM1144,866h6v6h-6ZM1152,866h6v6h-6ZM1160,866h6v6h-6ZM1168,866h6v6h-6ZM1176,866h6v6h-6ZM1184,866h6v6h-6ZM1192,866h6v6h-6ZM1200,866h6v6h-6ZM1208,866h6v6h-6ZM1216,866h6v6h-6ZM1224,866h6v6h-6ZM1232,866h6v6h-6ZM1240,866h6v6h-6ZM1248,866h6v6h-6ZM1256,866h6v6h-6ZM1264,866h6v6h-6ZM1272,866h6v6h-6ZM1280,866h6v6h-6ZM1288,866h6v6h-6ZM1296,866h6v6h-6ZM1304,866h6v6h-6ZM1312,866h6v6h-6ZM1320,866h6v6h-6ZM1328,866h6v6h-6ZM1336,866h6v6h-6ZM1344,866h6v6h-6ZM1352,866h6v6h-6ZM1360,866h6v6h-6ZM1368,866h6v6h-6ZM1376,866h6v6h-6ZM1384,866h6v6h-6ZM1392,866h6v6h-6ZM1400,866h6v6h-6ZM1408,866h6v6h-6ZM1416,866h6v6h-6ZM1424,866h6v6h-6ZM1432,866h6v6h-6ZM1440,866h6v6h-6ZM1448,866h6v6h-6ZM1456,866h6v6h-6ZM1464,866h6v6h-6ZM1472,866h6v6h-6ZM1480,866h6v6h-6ZM1488,866h6v6h-6ZM1496,866h6v6h-6ZM1504,866h6v6h-6ZM1512,866h6v6h-6ZM1520,866h6v6h-6ZM1528,866h6v6h-6ZM1536,866h6v6h-6ZM1544,866h6v6h-6ZM1552,866h6v6h-6ZM1560,866h6v6h-6ZM1568,866h6v6h-6ZM1576,866h6v6h-6ZM1584,866h6v6h-6ZM1592,866h6v6h-6ZM1600,866h6v6h-6ZM1608,866h6v6h-6ZM1616,866h6v6h-6ZM1624,866h6v6h-6ZM1632,866h6v6h-6ZM1640,866h6v6h-6ZM1648,866h6v6h-6ZM1656,866h6v6h-6ZM1664,866h6v6h-6ZM1672,866h6v6h-6ZM1680,866h6v6h-6ZM1688,866h6v6h-6ZM1696,866h6v6h-6ZM1704,866h6v6h-6ZM1712,866h6v6h-6ZM1720,866h6v6h-6ZM1728,866h6v6h-6ZM1736,866h6v6h-6ZM1744,866h6v6h-6ZM1752,866h6v6h-6ZM1760,866h6v6h-6ZM1768,866h6v6h-6ZM1776,866h6v6h-6ZM1784,866h6v6h-6ZM1792,866h6v6h-6ZM1800,866h6v6h-6ZM1808,866h6v6h-6ZM1816,866h6v6h-6ZM1824,866h6v6h-6ZM1832,866h6v6h-6ZM1840,866h6v6h-6ZM1848,866h6v6h-6Z" fill="#FF0000" shape-rendering="crispEdges"/><path d="M3,866h3v6h-3ZM8,866h6v6h-6ZM16,866h6v6h-6ZM24,866h6v6h-6ZM32,866h6v6h-6Z" fill="#1E90FF" shape-rendering="crispEdges"/></g>
<g id="main"><path d="M3,438.5H1870" stroke="#FF00FF" stroke-width="1" shape-rendering="crispEdges"/><path d="M3,464.5H1870" stroke="#FF0000" stroke-width="1" shape-rendering="crispEdges"/><path d="M1355,296 L1400,360" stroke="#FFFF00" stroke-width="1" stroke-dasharray="2,4" fill="none"/><circle cx="1353" cy="293" r="9.5" fill="#00FFFF" stroke="#FF0000" stroke-width="1"/><circle cx="1406" cy="365" r="9.5" fill="#00FFFF" stroke="#FF0000" stroke-width="1"/><path d="M3.5,33V52M1,49.5H3M4,46.5H6M59.5,126V156M57,148.5H59M60,134.5H62M75.5,116V150M73,148.5H75M76,131.5H78M83.5,107V135M81,131.5H83M84,122.5H86M99.5,158V175M97,167.5H99M100,164.5H102M107.5,138V169M105,164.5H107M108,139.5H110M115.5,122V154M113,139.5H115M116,128.5H118M171.5,180V204M169,191.5H171M172,180.5H174M179.5,160V187M177,180.5H179M180,164.5H182M187.5,132V165M185,164.5H187M188,132.5H190M203.5,102V151M201,150.5H203M204,102.5H206M211.5,94V115M209,102.5H211M212,104.5H214M259.5,124V137M257,125.5H259M260,124.5H262M299.5,126V147M297,143.5H299M300,133.5H302M315.5,141V182M313,162.5H315M316,143.5H318M323.5,133V148M321,143.5H323M324,143.5H326M331.5,123V144M329,143.5H331M332,125.5H334M339.5,114V129M337,125.5H339M340,115.5H342M347.5,102V120M345,115.5H347M348,111.5H350M371.5,101V119M369,117.5H371M372,104.5H374M387.5,92V106M385,104.5H387M388,94.5H390M419.5,145V163M417,155.5H419M420,150.5H422M451.5,164V180M449,174.5H451M452,173.5H454M467.5,140V173M465,172.5H467M468,165.5H470M483.5,157V171M481,170.5H483M484,164.5H486M499.5,148V175M497,169.5H499M500,152.5H502M507.5,144V172M505,152.5H507M508,144.5H510M523.5,136V165M521,150.5H523M524,145.5H526M531.5,128V147M529,145.5H531M532,144.5H534M547.5,159V180M545,178.5H547M548,160.5H550M555.5,154V164M553,160.5H555M556,156.5H558M571.5,138V157M569,155.5H571M572,139.5H574M587.5,144V152M585,151.5H587M588,150.5H590M595.5,136V151M593,150.5H595M596,142.5H598M603.5,123V144M601,142.5H603M604,123.5H606M619.5,106V134M617,126.5H619M620,114.5H622M635.5,104V121M633,114.5H635M636,110.5H638M643.5,88V123M641,110.5H643M644,92.5H646M667.5,87V103M665,102.5H667M668,92.5H670M691.5,100V108M689,106.5H691M692,101.5H694M699.5,93V104M697,101.5H699M700,93.5H702M739.5,166V174M737,166.5H739M740,170.5H742M747.5,156V173M745,170.5H747M748,168.5H750M763.5,156V167M761,163.5H763M764,157.5H766M771.5,145V159M769,157.5H771M772,153.5H774M779.5,138V161M777,153.5H779M780,141.5H782M787.5,128V149M785,141.5H787M788,134.5H790M795.5,128V138M793,134.5H795M796,134.5H798M803.5,125V138M801,134.5H803M804,126.5H806M811.5,114V127M809,126.5H811M812,119.5H814M819.5,115V126M817,119.5H819M820,117.5H822M851.5,134V138M849,136.5H851M852,135.5H854M867.5,130V138M865,136.5H867M868,134.5H870M883.5,134V140M881,137.5H883M884,136.5H886M891.5,130V142M889,136.5H891M892,131.5H894M899.5,111V133M897,131.5H899M900,114.5H902M915.5,94V118M913,114.5H915M916,99.5H918M947.5,119V134M945,129.5H947M948,120.5H950M955.5,103V121M953,120.5H955M956,111.5H958M971.5,114V127M969,119.5H971M972,114.5H974M1003.5,145V167M1001,164.5H1003M1004,158.5H1006M1027.5,188V210M1025,209.5H1027M1028,200.5H1030M1035.5,184V206M1033,200.5H1035M1036,185.5H1038M1051.5,185V207M1049,193.5H1051M1052,188.5H1054M1083.5,212V226M1081,225.5H1083M1084,213.5H1086M1091.5,203V217M1089,213.5H1091M1092,210.5H1094M1099.5,202V216M1097,210.5H1099M1100,210.5H1102M1115.5,187V218M1113,213.5H1115M1116,191.5H1118M1131.5,203V223M1129,211.5H1131M1132,204.5H1134M1139.5,196V213M1137,204.5H1139M1140,197.5H1142M1155.5,181V199M1153,198.5H1155M1156,194.5H1158M1163.5,177V196M1161,194.5H1163M1164,177.5H1166M1171.5,170V179M1169,177.5H1171M1172,174.5H1174M1187.5,175V186M1185,185.5H1187M1188,176.5H1190M1203.5,171V181M1201,178.5H1203M1204,172.5H1206M1235.5,228V242M1233,239.5H1235M1236,237.5H1238M1267.5,270V290M1265,282.5H1267M1268,284.5H1270M1275.5,273V290M1273,284.5H1275M1276,275.5H1278M1283.5,254V276M1281,275.5H1283M1284,260.5H1286M1299.5,258V271M1297,268.5H1299M1300,260.5H1302M1323.5,252V263M1321,260.5H1323M1324,255.5H1326M1371.5,321V334M1369,333.5H1371M1372,326.5H1374M1379.5,323V334M1377,326.5H1379M1380,326.5H1382M1411.5,344V369M1409,362.5H1411M1412,344.5H1414M1419.5,338V348M1417,343.5H1419M1420,340.5H1422M1451.5,374V391M1449,388.5H1451M1452,375.5H1454M1475.5,419V441M1473,427.5H1475M1476,424.5H1478M1499.5,466V488M1497,472.5H1499M1500,468.5H1502M1523.5,489V507M1521,503.5H1523M1524,494.5H1526M1539.5,503V548M1537,520.5H1539M1540,510.5H1542M1547.5,484V513M1545,510.5H1547M1548,484.5H1550M1571.5,478V501M1569,500.5H1571M1572,490.5H1574M1587.5,477V493M1585,492.5H1587M1588,482.5H1590M1595.5,462V485M1593,482.5H1595M1596,465.5H1598M1627.5,507V528M1625,526.5H1627M1628,513.5H1630M1635.5,494V515M1633,513.5H1635M1636,501.5H1638M1651.5,509V528M1649,516.5H1651M1652,512.5H1654M1683.5,522V541M1681,528.5H1683M1684,524.5H1686M1699.5,477V530M1697,528.5H1699M1700,477.5H1702M1715.5,467V483M1713,480.5H1715M1716,474.5H1718M1723.5,457V483M1721,474.5H1723M1724,466.5H1726M1731.5,454V469M1729,466.5H1731M1732,460.5H1734M1755.5,462V495M1753,493.5H1755M1756,464.5H1758M1771.5,456V475M1769,473.5H1771M1772,456.5H1774M1795.5,489V508M1793,504.5H1795M1796,495.5H1798M1803.5,486V500M1801,495.5H1803M1804,488.5H1806M1843.5,484V507M1841,506.5H1843M1844,484.5H1846M1851.5,464V485M1849,484.5H1851M1852,464.5H1854" stroke="#1E90FF" stroke-width="1" fill="none" shape-rendering="crispEdges"/><path d="M11.5,40V52M9,46.5H11M12,48.5H14M27.5,45V105M25,46.5H27M28,93.5H30M35.5,85V121M33,93.5H35M36,106.5H38M43.5,106V150M41,106.5H43M44,148.5H46M51.5,123V154M49,148.5H51M52,148.5H54M67.5,132V152M65,134.5H67M68,148.5H70M91.5,116V170M89,122.5H91M92,167.5H94M123.5,109V148M121,128.5H123M124,135.5H126M131.5,134V165M129,135.5H131M132,148.5H134M139.5,134V158M137,148.5H139M140,154.5H142M147.5,143V163M145,154.5H147M148,158.5H150M155.5,150V171M153,158.5H155M156,169.5H158M163.5,168V193M161,169.5H163M164,191.5H166M195.5,129V151M193,132.5H195M196,150.5H198M219.5,98V110M217,104.5H219M220,109.5H222M227.5,102V115M225,109.5H227M228,110.5H230M235.5,104V119M233,110.5H235M236,118.5H238M243.5,111V126M241,118.5H243M244,124.5H246M251.5,113V130M249,124.5H251M252,125.5H254M267.5,121V135M265,124.5H267M268,130.5H270M275.5,125V136M273,130.5H275M276,134.5H278M283.5,135V157M281,135.5H283M284,143.5H286M291.5,141V155M289,143.5H291M292,143.5H294M307.5,128V192M305,133.5H307M308,162.5H310M355.5,111V120M353,111.5H355M356,119.5H358M363.5,111V121M361,119.5H363M364,117.5H366M379.5,100V109M377,104.5H379M380,104.5H382M395.5,96V110M393,96.5H395M396,98.5H398M403.5,100V127M401,100.5H403M404,126.5H406M411.5,125V155M409,126.5H411M412,154.5H414M427.5,150V169M425,150.5H427M428,167.5H430M435.5,162V179M433,167.5H435M436,173.5H438M443.5,168V177M441,173.5H443M444,174.5H446M459.5,166V190M457,173.5H459M460,174.5H462M475.5,165V175M473,165.5H475M476,170.5H478M491.5,161V175M489,164.5H491M492,169.5H494M515.5,132V157M513,144.5H515M516,150.5H518M539.5,138V182M537,144.5H539M540,178.5H542M579.5,138V153M577,139.5H579M580,152.5H582M611.5,125V140M609,125.5H611M612,126.5H614M627.5,113V128M625,114.5H627M628,114.5H630M651.5,65V102M649,92.5H651M652,100.5H654M659.5,97V107M657,100.5H659M660,103.5H662M675.5,88V101M673,92.5H675M676,95.5H678M683.5,94V107M681,95.5H683M684,106.5H686M707.5,93V110M705,93.5H707M708,109.5H710M715.5,109V141M713,110.5H715M716,138.5H718M723.5,130V151M721,138.5H723M724,138.5H726M731.5,133V165M729,138.5H731M732,162.5H734M755.5,128V175M753,168.5H755M756,163.5H758M827.5,114V125M825,117.5H827M828,122.5H830M835.5,121V140M833,122.5H835M836,133.5H838M843.5,131V138M841,133.5H843M844,136.5H846M859.5,134V138M857,135.5H859M860,136.5H862M875.5,134V139M873,134.5H875M876,137.5H878M923.5,96V108M921,99.5H923M924,101.5H926M931.5,97V126M929,101.5H931M932,124.5H934M939.5,114V142M937,124.5H939M940,129.5H942M963.5,107V137M961,111.5H963M964,119.5H966M979.5,107V129M977,114.5H979M980,124.5H982M987.5,116V149M985,124.5H987M988,146.5H990M995.5,145V174M993,146.5H995M996,164.5H998M1011.5,156V205M1009,158.5H1011M1012,179.5H1014M1019.5,176V210M1017,179.5H1019M1020,209.5H1022M1043.5,185V200M1041,185.5H1043M1044,193.5H1046M1059.5,187V201M1057,188.5H1059M1060,196.5H1062M1067.5,195V216M1065,196.5H1067M1068,214.5H1070M1075.5,213V226M1073,214.5H1075M1076,225.5H1078M1107.5,208V223M1105,210.5H1107M1108,213.5H1110M1123.5,191V217M1121,191.5H1123M1124,211.5H1126M1147.5,190V200M1145,197.5H1147M1148,199.5H1150M1179.5,170V188M1177,174.5H1179M1180,185.5H1182M1195.5,175V182M1193,176.5H1195M1196,178.5H1198M1211.5,171V194M1209,172.5H1211M1212,193.5H1214M1219.5,193V237M1217,193.5H1219M1220,235.5H1222M1227.5,226V241M1225,235.5H1227M1228,239.5H1230M1243.5,228V295M1241,237.5H1243M1244,269.5H1246M1251.5,256V282M1249,269.5H1251M1252,275.5H1254M1259.5,273V290M1257,275.5H1259M1260,282.5H1262M1291.5,258V275M1289,260.5H1291M1292,268.5H1294M1331.5,256V271M1329,256.5H1331M1332,265.5H1334M1339.5,266V286M1337,266.5H1339M1340,284.5H1342M1347.5,275V287M1345,284.5H1347M1348,286.5H1350M1355.5,287V298M1353,287.5H1355M1356,297.5H1358M1363.5,295V359M1361,297.5H1363M1364,356.5H1366M1387.5,323V338M1385,326.5H1387M1388,336.5H1390M1395.5,335V369M1393,336.5H1395M1396,354.5H1398M1403.5,358V370M1401,358.5H1403M1404,362.5H1406M1427.5,335V351M1425,340.5H1427M1428,343.5H1430M1435.5,343V355M1433,343.5H1435M1436,350.5H1438M1443.5,350V389M1441,350.5H1443M1444,388.5H1446M1459.5,376V407M1457,376.5H1459M1460,401.5H1462M1467.5,397V433M1465,401.5H1467M1468,427.5H1470M1483.5,418V436M1481,424.5H1483M1484,425.5H1486M1491.5,426V473M1489,426.5H1491M1492,472.5H1494M1507.5,448V487M1505,468.5H1507M1508,478.5H1510M1515.5,477V505M1513,478.5H1515M1516,503.5H1518M1531.5,490V522M1529,494.5H1531M1532,520.5H1534M1563.5,478V514M1561,483.5H1563M1564,502.5H1566M1579.5,481V495M1577,490.5H1579M1580,494.5H1582M1603.5,457V492M1601,465.5H1603M1604,478.5H1606M1611.5,476V518M1609,478.5H1611M1612,514.5H1614M1619.5,505V536M1617,514.5H1619M1620,526.5H1622M1643.5,500V517M1641,501.5H1643M1644,516.5H1646M1659.5,503V514M1657,512.5H1659M1660,513.5H1662M1667.5,507V522M1665,513.5H1667M1668,516.5H1670M1675.5,512V540M1673,516.5H1675M1676,528.5H1678M1691.5,509V526M1689,524.5H1691M1692,525.5H1694M1707.5,462V490M1705,477.5H1707M1708,480.5H1710M1739.5,460V471M1737,460.5H1739M1740,462.5H1742M1747.5,454V494M1745,462.5H1747M1748,493.5H1750M1763.5,465V479M1761,465.5H1763M1764,473.5H1766M1779.5,462V491M1777,462.5H1779M1780,486.5H1782M1787.5,477V508M1785,486.5H1787M1788,504.5H1790M1811.5,486V501M1809,488.5H1811M1812,494.5H1814M1819.5,493V509M1817,494.5H1819M1820,506.5H1822M1835.5,496V508M1833,506.5H1835M1836,506.5H1838" stroke="#EE82EE" stroke-width="1" fill="none" shape-rendering="crispEdges"/><path d="M19.5,40V64M17,48.5H19M20,46.5H22M563.5,155V163M561,156.5H563M564,155.5H566M907.5,110V117M905,114.5H907M908,114.5H910M1307.5,260V273M1305,260.5H1307M1308,260.5H1310M1315.5,258V275M1313,260.5H1315M1316,260.5H1318M1555.5,476V499M1553,484.5H1555M1556,483.5H1558M1827.5,505V517M1825,506.5H1827M1828,506.5H1830" stroke="#FFFF00" stroke-width="1" fill="none" shape-rendering="crispEdges"/><path d="M3,33 L83.5,107.3 L123.3,109 L211.9,93.5 L387,91.5 L467.7,139.5 L530.8,128.4 L651.2,65.5 L812,114.3 L915.2,93.5 L1179.6,169.7 L1323,252 L1427.5,334.7 L1603.3,456.5 L1747.6,454 L1851.5,463.5" stroke="#FFFFFF" stroke-width="1" fill="none" stroke-dasharray="3,3" shape-rendering="crispEdges"/><path d="M3,137.3 L51.4,155.4 L99,173 L171.7,203 L307.8,190.7 L459.8,190 L499.8,174.3 L539,182 L682.8,106.5 L891.7,141.4 L1083.7,226 L1243,293.7 L1403.3,371 L1539.3,547.1 L1683.1,540" stroke="#FFFFFF" stroke-width="1" fill="none" stroke-dasharray="3,3" shape-rendering="crispEdges"/><path d="M3,82 L51.4,155.4 L83.5,107.3 L99,173 L123.3,110.3 L171.7,203 L211.9,94 L307.8,190.7 L387,91.5 L459.8,190 L467.7,139.5 L499.8,174.3 L530.8,128.4 L539,181 L651.2,65.5 L682.8,105.9 L812,114.3 L891.7,141.4 L915.2,93.5 L1083.7,226 L1179.6,169.7 L1243,293.7 L1323,252 L1403.3,372 L1427.5,334.7 L1539.3,547.1 L1603.3,456.5 L1683.1,540 L1747.6,454 L1827.3,516.1 L1851.5,463.5" stroke="#FFFFFF" stroke-width="1" fill="none" shape-rendering="crispEdges"/><path d="M1603,456 L1870,449.5" stroke="#FF00FF" stroke-width="3" fill="none" clip-path="url(#mainclip)" shape-rendering="crispEdges"/><path d="M1683,540 L1870,512" stroke="#0000FF" stroke-width="3" fill="none" clip-path="url(#mainclip)" shape-rendering="crispEdges"/><path d="M162,150H166V157L170,153.5V158L164,164L158,158V153.5L162,157ZM305,111H309V118L313,114.5V119L307,125L301,119V114.5L305,118ZM721.6,113.4H725.6V120.4L729.6,116.9V121.4L723.6,127.4L717.6,121.4V116.9L721.6,120.4ZM985.4,99.2H989.4V106.2L993.4,102.7V107.2L987.4,113.2L981.4,107.2V102.7L985.4,106.2ZM1065.2,178.6H1069.2V185.6L1073.2,182.1V186.6L1067.2,192.6L1061.2,186.6V182.1L1065.2,185.6ZM1345.7,258H1349.7V265L1353.7,261.5V266L1347.7,272L1341.7,266V261.5L1345.7,265ZM1785.4,460.3H1789.4V467.3L1793.4,463.8V468.3L1787.4,474.3L1781.4,468.3V463.8L1785.4,467.3Z" fill="#FF0000"/><rect x="206" y="81" width="10" height="10" fill="none" stroke="#FF00FF" stroke-width="2"/><path d="M208.5,83.5L214,89M214,83.5L208.5,89" stroke="#FF00FF" stroke-width="1.4"/><rect x="910" y="78" width="10" height="10" fill="none" stroke="#FF00FF" stroke-width="2"/><path d="M912.5,80.5L918,86M918,80.5L912.5,86" stroke="#FF00FF" stroke-width="1.4"/><rect x="542" y="180" width="10" height="10" fill="none" stroke="#FFFF00" stroke-width="2"/><path d="M544.5,185L546.5,187.5L550,182.5" stroke="#FFFF00" stroke-width="1.6" fill="none"/><rect x="1038" y="188" width="10" height="10" fill="none" stroke="#FFFF00" stroke-width="2"/><path d="M1040.5,193L1042.5,195.5L1046,190.5" stroke="#FFFF00" stroke-width="1.6" fill="none"/><rect x="1262" y="288" width="10" height="10" fill="none" stroke="#FFFF00" stroke-width="2"/><path d="M1264.5,293L1266.5,295.5L1270,290.5" stroke="#FFFF00" stroke-width="1.6" fill="none"/><rect x="1414" y="348" width="10" height="10" fill="none" stroke="#FFFF00" stroke-width="2"/><path d="M1416.5,353L1418.5,355.5L1422,350.5" stroke="#FFFF00" stroke-width="1.6" fill="none"/><path d="M1349.5,291.5H1352.5V289L1357,293.2L1352.5,297.5V295H1349.5Z" fill="#FF0000"/><path d="M1402.5,365.5L1407,361.5V369.5Z" fill="#006400"/><path d="M1427,362.8H1446.6V366.2H1427ZM1434.9,355H1438.7V374H1434.9ZM1459.9,350H1463.2V379H1459.9V356.8L1452.1,361.2V357.6ZM1481.6,350H1484.9V379H1481.6V356.8L1473.8,361.2V357.6ZM1495.2,375H1499.8V379H1495.2ZM1514.7,350H1518.0V379H1514.7V356.8L1506.9,361.2V357.6Z" fill="#FFFF00"/><text x="1741" y="44" font-size="24" fill="#FF0000">-7.5Pips</text></g>
<path d="M2,2.5H1871M2,563.5H1871M2.5,2V564M1870.5,2V564M2,565.5H1871M2,718.5H1871M2.5,565V719M1870.5,565V719M2,720.5H1871M2,850.5H1871M2.5,720V851M1870.5,720V851M2,852.5H1871M2,875.5H1871M2.5,852V876M1870.5,852V876" stroke="#FFFFFF" stroke-width="1" fill="none" shape-rendering="crispEdges"/>
<path d="M1871,4.5H1874M1871,40.5H1874M1871,75.5H1874M1871,108.5H1874M1871,144.5H1874M1871,180.5H1874M1871,212.5H1874M1871,248.5H1874M1871,284.5H1874M1871,316.5H1874M1871,352.5H1874M1871,388.5H1874M1871,420.5H1874M1871,456.5H1874M1871,492.5H1874M1871,524.5H1874M1871,560.5H1874M1871,567.5H1873M1871,717.5H1873M1871,722.5H1873M3.5,876V879M67.5,876V879M131.5,876V879M195.5,876V879M259.5,876V879M323.5,876V879M387.5,876V879M451.5,876V879M515.5,876V879M579.5,876V879M643.5,876V879M707.5,876V879M771.5,876V879M835.5,876V879M899.5,876V879M963.5,876V879M1027.5,876V879M1091.5,876V879M1155.5,876V879M1219.5,876V879M1283.5,876V879M1347.5,876V879M1411.5,876V879M1475.5,876V879M1539.5,876V879M1603.5,876V879M1667.5,876V879M1731.5,876V879M1795.5,876V879" stroke="#FFFFFF" stroke-width="1" fill="none" shape-rendering="crispEdges"/>
<g class="bt" font-size="9.5" fill="#FFFFFF"><text x="1876" y="8" font-size="10" textLength="33.61" lengthAdjust="spacingAndGlyphs">111.790</text><text x="1876" y="44" font-size="10" textLength="33.61" lengthAdjust="spacingAndGlyphs">111.735</text><text x="1876" y="79" font-size="10" textLength="33.61" lengthAdjust="spacingAndGlyphs">111.680</text><text x="1876" y="112" font-size="10" textLength="33.61" lengthAdjust="spacingAndGlyphs">111.630</text><text x="1876" y="148" font-size="10" textLength="33.61" lengthAdjust="spacingAndGlyphs">111.575</text><text x="1876" y="184" font-size="10" textLength="33.61" lengthAdjust="spacingAndGlyphs">111.520</text><text x="1876" y="216" font-size="10" textLength="33.61" lengthAdjust="spacingAndGlyphs">111.470</text><text x="1876" y="252" font-size="10" textLength="33.61" lengthAdjust="spacingAndGlyphs">111.415</text><text x="1876" y="288" font-size="10" textLength="33.61" lengthAdjust="spacingAndGlyphs">111.360</text><text x="1876" y="320" font-size="10" textLength="33.61" lengthAdjust="spacingAndGlyphs">111.310</text><text x="1876" y="356" font-size="10" textLength="33.61" lengthAdjust="spacingAndGlyphs">111.255</text><text x="1876" y="392" font-size="10" textLength="33.61" lengthAdjust="spacingAndGlyphs">111.200</text><text x="1876" y="424" font-size="10" textLength="33.61" lengthAdjust="spacingAndGlyphs">111.150</text><text x="1876" y="460" font-size="10" textLength="33.61" lengthAdjust="spacingAndGlyphs">111.095</text><text x="1876" y="496" font-size="10" textLength="33.61" lengthAdjust="spacingAndGlyphs">111.040</text><text x="1876" y="528" font-size="10" textLength="33.61" lengthAdjust="spacingAndGlyphs">110.990</text><text x="1876" y="564" font-size="10" textLength="33.61" lengthAdjust="spacingAndGlyphs">110.935</text><text x="1874" y="576" font-size="10" textLength="28.44" lengthAdjust="spacingAndGlyphs">90.618</text><text x="1874" y="598" font-size="10" textLength="10.34" lengthAdjust="spacingAndGlyphs">75</text><text x="1874" y="615" font-size="10" textLength="10.34" lengthAdjust="spacingAndGlyphs">65</text><text x="1874" y="641" font-size="10" textLength="10.34" lengthAdjust="spacingAndGlyphs">50</text><text x="1874" y="667" font-size="10" textLength="10.34" lengthAdjust="spacingAndGlyphs">35</text><text x="1874" y="685" font-size="10" textLength="10.34" lengthAdjust="spacingAndGlyphs">25</text><text x="1874" y="715" font-size="10" textLength="23.27" lengthAdjust="spacingAndGlyphs">3.745</text><g clip-path="url(#cciax)"><text x="1874" y="724.5" font-size="10" textLength="15.51" lengthAdjust="spacingAndGlyphs">200</text></g><text x="1874" y="731" font-size="10" textLength="33.61" lengthAdjust="spacingAndGlyphs">198.328</text><text x="1874" y="753" font-size="10" textLength="15.51" lengthAdjust="spacingAndGlyphs">100</text><text x="1874" y="782" font-size="10" textLength="18.10" lengthAdjust="spacingAndGlyphs">0.00</text><text x="1874" y="810" font-size="10" textLength="18.61" lengthAdjust="spacingAndGlyphs">-100</text><text x="1874" y="839" font-size="10" textLength="18.61" lengthAdjust="spacingAndGlyphs">-200</text><text x="1874" y="847" font-size="10" textLength="36.71" lengthAdjust="spacingAndGlyphs">-252.065</text><text x="1874" y="862" font-size="10" textLength="5.17" lengthAdjust="spacingAndGlyphs">4</text><text x="1874" y="872" font-size="10" textLength="5.17" lengthAdjust="spacingAndGlyphs">0</text><text x="2" y="888">7 Mar 2019</text><text x="66" y="888">7 Mar 17:00</text><text x="130" y="888">7 Mar 17:40</text><text x="194" y="888">7 Mar 18:20</text><text x="258" y="888">7 Mar 19:00</text><text x="322" y="888">7 Mar 19:40</text><text x="386" y="888">7 Mar 20:20</text><text x="450" y="888">7 Mar 21:00</text><text x="514" y="888">7 Mar 21:40</text><text x="578" y="888">7 Mar 22:20</text><text x="642" y="888">7 Mar 23:00</text><text x="706" y="888">7 Mar 23:40</text><text x="770" y="888">8 Mar 00:20</text><text x="834" y="888">8 Mar 01:00</text><text x="898" y="888">8 Mar 01:40</text><text x="962" y="888">8 Mar 02:20</text><text x="1026" y="888">8 Mar 03:00</text><text x="1090" y="888">8 Mar 03:40</text><text x="1154" y="888">8 Mar 04:20</text><text x="1218" y="888">8 Mar 05:00</text><text x="1282" y="888">8 Mar 05:40</text><text x="1346" y="888">8 Mar 06:20</text><text x="1410" y="888">8 Mar 07:00</text><text x="1474" y="888">8 Mar 07:40</text><text x="1538" y="888">8 Mar 08:20</text><text x="1602" y="888">8 Mar 09:00</text><text x="1666" y="888">8 Mar 09:40</text><text x="1730" y="888">8 Mar 10:20</text><text x="1794" y="888">8 Mar 11:00</text></g><g font-size="9.5"><rect x="1872" y="432" width="41" height="11" fill="#FF00FF"/><text fill="#000000" x="1876" y="441.5" font-size="10" textLength="33.61" lengthAdjust="spacingAndGlyphs">111.122</text><rect x="1872" y="459" width="41" height="11" fill="#FFFFFF"/><text fill="#000000" x="1876" y="468.5" font-size="10" textLength="33.61" lengthAdjust="spacingAndGlyphs">111.082</text></g>
<g id="buttons"><rect x="8.5" y="23.5" width="34" height="16" rx="1.5" fill="#556B2F" stroke="#C8B45A" stroke-width="1"/><text x="13.8" y="36" font-size="12" fill="#FFFFFF" textLength="21.5" lengthAdjust="spacingAndGlyphs">Csv</text><rect x="48.5" y="23.5" width="54" height="16" rx="1.5" fill="#696969" stroke="#A0A0A0" stroke-width="1"/><text x="53.2" y="36" font-size="12" fill="#FFA500" textLength="43.5" lengthAdjust="spacingAndGlyphs">History</text><rect x="108.5" y="23.5" width="44" height="16" rx="1.5" fill="#808080" stroke="#A8A8A8" stroke-width="1"/><text x="112.8" y="36" font-size="12" fill="#FFFF00" textLength="33.8" lengthAdjust="spacingAndGlyphs">Demo</text><rect x="158.5" y="23.5" width="34" height="16" rx="1.5" fill="#FF0000" stroke="#FF9090" stroke-width="1"/><text x="164" y="36" font-size="12" fill="#FFFFFF" textLength="22" lengthAdjust="spacingAndGlyphs">Sell</text><rect x="198.5" y="23.5" width="34" height="16" rx="1.5" fill="#0000FF" stroke="#90C8FF" stroke-width="1"/><text x="204.9" y="36" font-size="12" fill="#FFFFFF" textLength="21.1" lengthAdjust="spacingAndGlyphs">Buy</text><rect x="238.5" y="23.5" width="34" height="16" rx="1.5" fill="#008000" stroke="#90FF90" stroke-width="1"/><text x="242.5" y="36" font-size="12" fill="#FFFFFF" textLength="25.3" lengthAdjust="spacingAndGlyphs">Exit</text></g>
<g class="bt" font-size="9.5" fill="#FFFFFF">
<path d="M6,9H13L9.5,13Z" fill="#FFFFFF"/>
<text x="18" y="14">USDJPY,M5</text>
<text x="7" y="578" textLength="276" lengthAdjust="spacingAndGlyphs">QWB(2,8,2.6,34,1.618) 59.9637 49.5429 47.9275 66.1174 29.7377</text>
<text x="7" y="733">T3_CCI_MOD: 14 60.491 60.491 0.000</text>
<text x="7" y="865" textLength="107" lengthAdjust="spacingAndGlyphs">HMA_BAR 3.0000 1.0000</text>
</g>
</svg>
</body></html>
